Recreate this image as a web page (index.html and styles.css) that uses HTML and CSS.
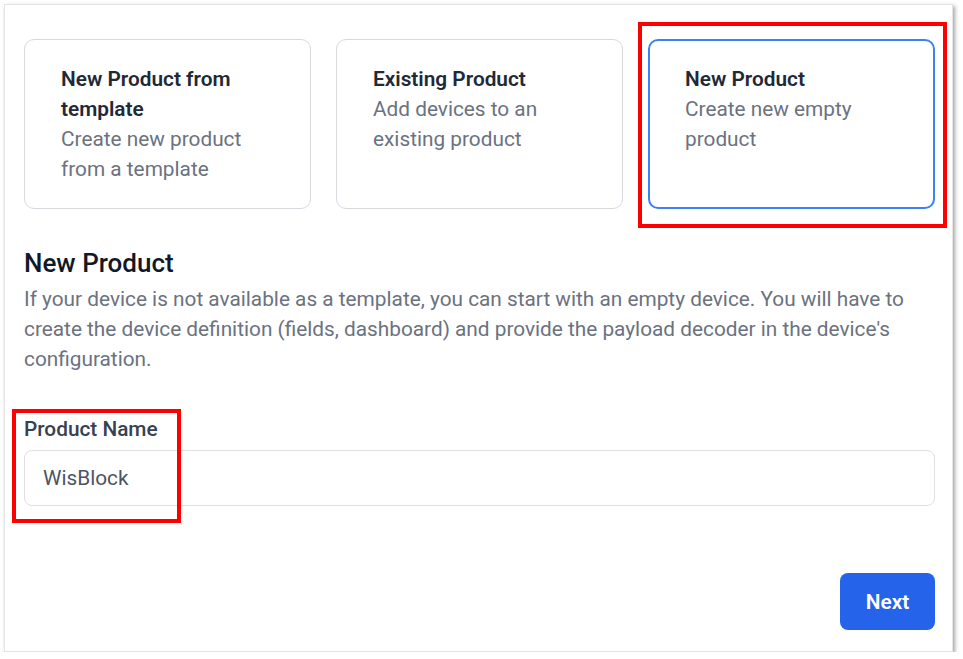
FILE: index.html
```html
<!DOCTYPE html>
<html lang="en">
<head>
<meta charset="utf-8">
<title>New Product</title>
<link rel="stylesheet" href="styles.css">
</head>
<body>
<div class="panel">
  <div class="cards">
    <div class="card">
      <div class="card-title">New Product from template</div>
      <div class="card-desc">Create new product from a template</div>
    </div>
    <div class="card">
      <div class="card-title">Existing Product</div>
      <div class="card-desc">Add devices to an existing product</div>
    </div>
    <div class="card card-selected">
      <div class="card-title">New Product</div>
      <div class="card-desc">Create new empty product</div>
    </div>
  </div>
  <h2 class="heading">New Product</h2>
  <p class="intro">If your device is not available as a template, you can start with an empty device. You will have to create the device definition (fields, dashboard) and provide the payload decoder in the device's configuration.</p>
  <label class="label" for="pname">Product Name</label>
  <input class="input" id="pname" type="text" value="WisBlock">
  <div class="actions">
    <button class="btn" type="button">Next</button>
  </div>
  <div class="mark mark-card"></div>
  <div class="mark mark-field"></div>
</div>
</body>
</html>
```
FILE: styles.css
```css
* { box-sizing: border-box; }
html, body { margin: 0; padding: 0; background: #ffffff; }
body {
  font-family: Roboto, "Liberation Sans", Arial, sans-serif;
  color: #1f2937;
}
.panel {
  position: relative;
  margin: 4px 0 0 4px;
  width: 949px;
  height: 648px;
  background: #ffffff;
  border: 1px solid #e4e4e4;
  box-shadow: 2px 2px 4px rgba(0, 0, 0, 0.35);
  padding: 34px 17px 0 19px;
  display: flex;
  flex-direction: column;
}
.cards {
  display: grid;
  grid-template-columns: repeat(3, 1fr);
  gap: 25px;
}
.card {
  height: 170px;
  border: 1px solid #d6d9de;
  border-radius: 10px;
  padding: 24px 36px 0 36px;
  background: #fff;
}
.card-selected {
  border: 2px solid #3b82f6;
  padding: 23px 35px 0 35px;
}
.card-title {
  font-size: 20.8px;
  line-height: 30px;
  font-weight: 600;
  color: #1f2937;
}
.card-desc {
  font-size: 20.8px;
  line-height: 30px;
  color: #6b7280;
}
.heading {
  margin: 38px 0 0 0;
  font-size: 26px;
  line-height: 32px;
  font-weight: 500;
  color: #111827;
}
.intro {
  margin: 5px 0 0 0;
  font-size: 20.8px;
  line-height: 30px;
  color: #6b7280;
}
.label {
  display: block;
  margin-top: 41px;
  font-size: 20.8px;
  line-height: 28px;
  font-weight: 500;
  color: #374151;
}
.input {
  display: block;
  margin-top: 7px;
  width: 100%;
  height: 56px;
  border: 1px solid #dcdfe4;
  border-radius: 8px;
  padding: 0 18px;
  font-family: Roboto, "Liberation Sans", Arial, sans-serif;
  font-size: 20.8px;
  color: #4b5563;
  background: #fff;
  outline: none;
}
.actions {
  display: flex;
  justify-content: flex-end;
  margin-top: 67px;
}
.btn {
  width: 95px;
  height: 57px;
  border: none;
  border-radius: 8px;
  background: #2563eb;
  color: #ffffff;
  font-family: Roboto, "Liberation Sans", Arial, sans-serif;
  font-size: 20.8px;
  font-weight: 600;
  cursor: pointer;
}
.mark {
  position: absolute;
  border: 4px solid #ff0000;
  pointer-events: none;
}
.mark-card {
  left: 633px;
  top: 17px;
  width: 309px;
  height: 206px;
}
.mark-field {
  left: 7px;
  top: 404px;
  width: 169px;
  height: 114px;
}
```
